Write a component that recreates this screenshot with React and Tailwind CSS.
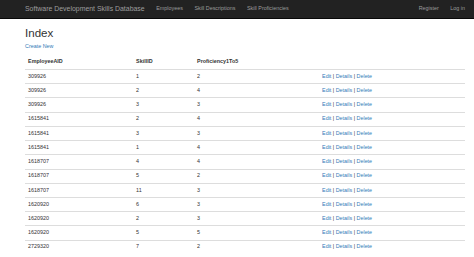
export default function App() {
  const rows = [
    ["309926", "1", "2"],
    ["309926", "2", "4"],
    ["309926", "3", "3"],
    ["1615841", "2", "4"],
    ["1615841", "3", "3"],
    ["1615841", "1", "4"],
    ["1618707", "4", "4"],
    ["1618707", "5", "2"],
    ["1618707", "11", "3"],
    ["1620920", "6", "3"],
    ["1620920", "2", "3"],
    ["1620920", "5", "5"],
    ["2729320", "7", "2"],
  ];
  return (
    <div className="min-h-[257px] bg-white text-[#333] font-['Liberation_Sans',Arial,sans-serif] text-[5.39px] leading-[7.7px]">
      <nav className="h-[19.25px] bg-[#222] border-b-[0.385px] border-[#080808]">
        <div className="flex h-full items-center justify-between pl-[25px] w-[465px]">
          <div className="flex items-center">
            <a className="text-[6.93px] leading-[7.7px] text-[#9d9d9d] pr-[5.8px]">Software Development Skills Database</a>
            <a className="px-[5.8px] text-[#9d9d9d]">Employees</a>
            <a className="px-[5.8px] text-[#9d9d9d]">Skill Descriptions</a>
            <a className="px-[5.8px] text-[#9d9d9d]">Skill Proficiencies</a>
          </div>
          <div className="flex items-center">
            <a className="px-[5.8px] text-[#9d9d9d]">Register</a>
            <a className="pl-[5.8px] text-[#9d9d9d]">Log in</a>
          </div>
        </div>
      </nav>
      <div className="pl-[25px] w-[465px]">
        <h2 className="mt-[7.7px] mb-[3.85px] text-[11.55px] leading-[12.7px] font-normal">Index</h2>
        <p className="mb-[3.85px]">
          <a className="text-[#337ab7]">Create New</a>
        </p>
        <table className="w-full border-collapse">
          <thead>
            <tr>
              <th className="w-[108px] text-left font-bold px-[3.08px] py-[3.08px] border-b border-[#ddd]">EmployeeAID</th>
              <th className="w-[61px] text-left font-bold px-[3.08px] py-[3.08px] border-b border-[#ddd]">SkillID</th>
              <th className="w-[125px] text-left font-bold px-[3.08px] py-[3.08px] border-b border-[#ddd]">Proficiency1To5</th>
              <th className="text-left px-[3.08px] py-[3.08px] border-b border-[#ddd]"></th>
            </tr>
          </thead>
          <tbody>
            {rows.map((r, i) => (
              <tr key={i}>
                <td className="px-[3.08px] py-[2.78px] border-t border-[#ddd]">{r[0]}</td>
                <td className="px-[3.08px] py-[2.78px] border-t border-[#ddd]">{r[1]}</td>
                <td className="px-[3.08px] py-[2.78px] border-t border-[#ddd]">{r[2]}</td>
                <td className="px-[3.08px] py-[2.78px] border-t border-[#ddd]">
                  <a className="text-[#337ab7]">Edit</a> | <a className="text-[#337ab7]">Details</a> | <a className="text-[#337ab7]">Delete</a>
                </td>
              </tr>
            ))}
          </tbody>
        </table>
      </div>
    </div>
  );
}
